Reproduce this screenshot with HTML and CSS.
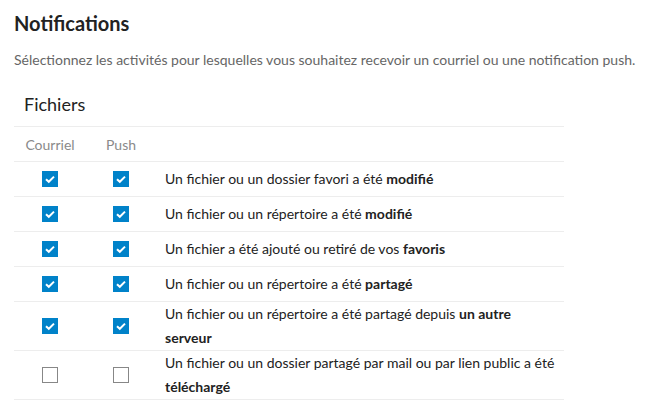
FILE: index.html
```html
<!DOCTYPE html>
<html lang="fr">
<head>
<meta charset="utf-8">
<title>Notifications</title>
<link rel="stylesheet" href="styles.css">
</head>
<body>
<section class="settings">
  <h2 class="title">Notifications</h2>
  <p class="hint">Sélectionnez les activités pour lesquelles vous souhaitez recevoir un courriel ou une notification push.</p>
  <h3 class="group">Fichiers</h3>
  <table class="grid">
    <thead>
      <tr>
        <th class="col-mail">Courriel</th>
        <th class="col-push">Push</th>
        <th></th>
      </tr>
    </thead>
    <tbody>
      <tr>
        <td class="col-mail"><span class="box on"></span></td>
        <td class="col-push"><span class="box on"></span></td>
        <td class="label">Un fichier ou un dossier favori a été <strong>modifié</strong></td>
      </tr>
      <tr>
        <td class="col-mail"><span class="box on"></span></td>
        <td class="col-push"><span class="box on"></span></td>
        <td class="label">Un fichier ou un répertoire a été <strong>modifié</strong></td>
      </tr>
      <tr>
        <td class="col-mail"><span class="box on"></span></td>
        <td class="col-push"><span class="box on"></span></td>
        <td class="label">Un fichier a été ajouté ou retiré de vos <strong>favoris</strong></td>
      </tr>
      <tr>
        <td class="col-mail"><span class="box on"></span></td>
        <td class="col-push"><span class="box on"></span></td>
        <td class="label">Un fichier ou un répertoire a été <strong>partagé</strong></td>
      </tr>
      <tr class="tall">
        <td class="col-mail"><span class="box on"></span></td>
        <td class="col-push"><span class="box on"></span></td>
        <td class="label">Un fichier ou un répertoire a été partagé depuis <strong>un autre serveur</strong></td>
      </tr>
      <tr class="tall">
        <td class="col-mail"><span class="box"></span></td>
        <td class="col-push"><span class="box"></span></td>
        <td class="label">Un fichier ou un dossier partagé par mail ou par lien public a été <strong>téléchargé</strong></td>
      </tr>
    </tbody>
  </table>
</section>
</body>
</html>
```
FILE: styles.css
```css
html, body {
  margin: 0;
  padding: 0;
  background: #ffffff;
}
body {
  font-family: "Lato", "Open Sans", sans-serif;
  color: #222222;
}
.settings {
  padding: 8px 14px 0 14px;
}
.title {
  margin: 0;
  font-size: 20px;
  font-weight: 700;
  line-height: 30px;
  color: #222222;
}
.hint {
  margin: 12px 0 0 0;
  font-size: 14px;
  line-height: 20px;
  color: #666666;
}
.group {
  margin: 20px 0 0 10px;
  font-size: 18px;
  font-weight: 400;
  line-height: 28px;
  color: #222222;
}
.grid {
  margin-top: 8px;
  width: 550px;
  border-collapse: collapse;
  font-size: 14px;
}
.grid tr {
  border-top: 1px solid #ededed;
  border-bottom: 1px solid #ededed;
}
.grid th {
  height: 34px;
  padding: 0;
  font-weight: 400;
  color: #8a8a8a;
  text-align: center;
  vertical-align: middle;
}
.grid td {
  height: 34px;
  padding: 0;
  vertical-align: middle;
}
.grid .tall td {
  height: 48px;
}
.col-mail {
  width: 72px;
  text-align: center;
}
.col-push {
  width: 70px;
  text-align: center;
}
.grid td.col-mail, .grid td.col-push {
  font-size: 0;
}
.grid td.label {
  padding-left: 9px;
  padding-right: 4px;
  line-height: 24px;
  color: #222222;
}
.label strong {
  font-weight: 700;
}
.box {
  display: inline-block;
  width: 16px;
  height: 16px;
  box-sizing: border-box;
  border: 1px solid #878787;
  background: #ffffff;
  vertical-align: middle;
}
.box.on {
  border-color: #0082c9;
  background-color: #0082c9;
  background-image: url("data:image/svg+xml;utf8,<svg xmlns='http://www.w3.org/2000/svg' width='16' height='16' viewBox='0 0 16 16'><path d='M4 8.2 L6.8 10.8 L12 5.6' fill='none' stroke='white' stroke-width='2'/></svg>");
  background-position: center;
  background-repeat: no-repeat;
}
```
